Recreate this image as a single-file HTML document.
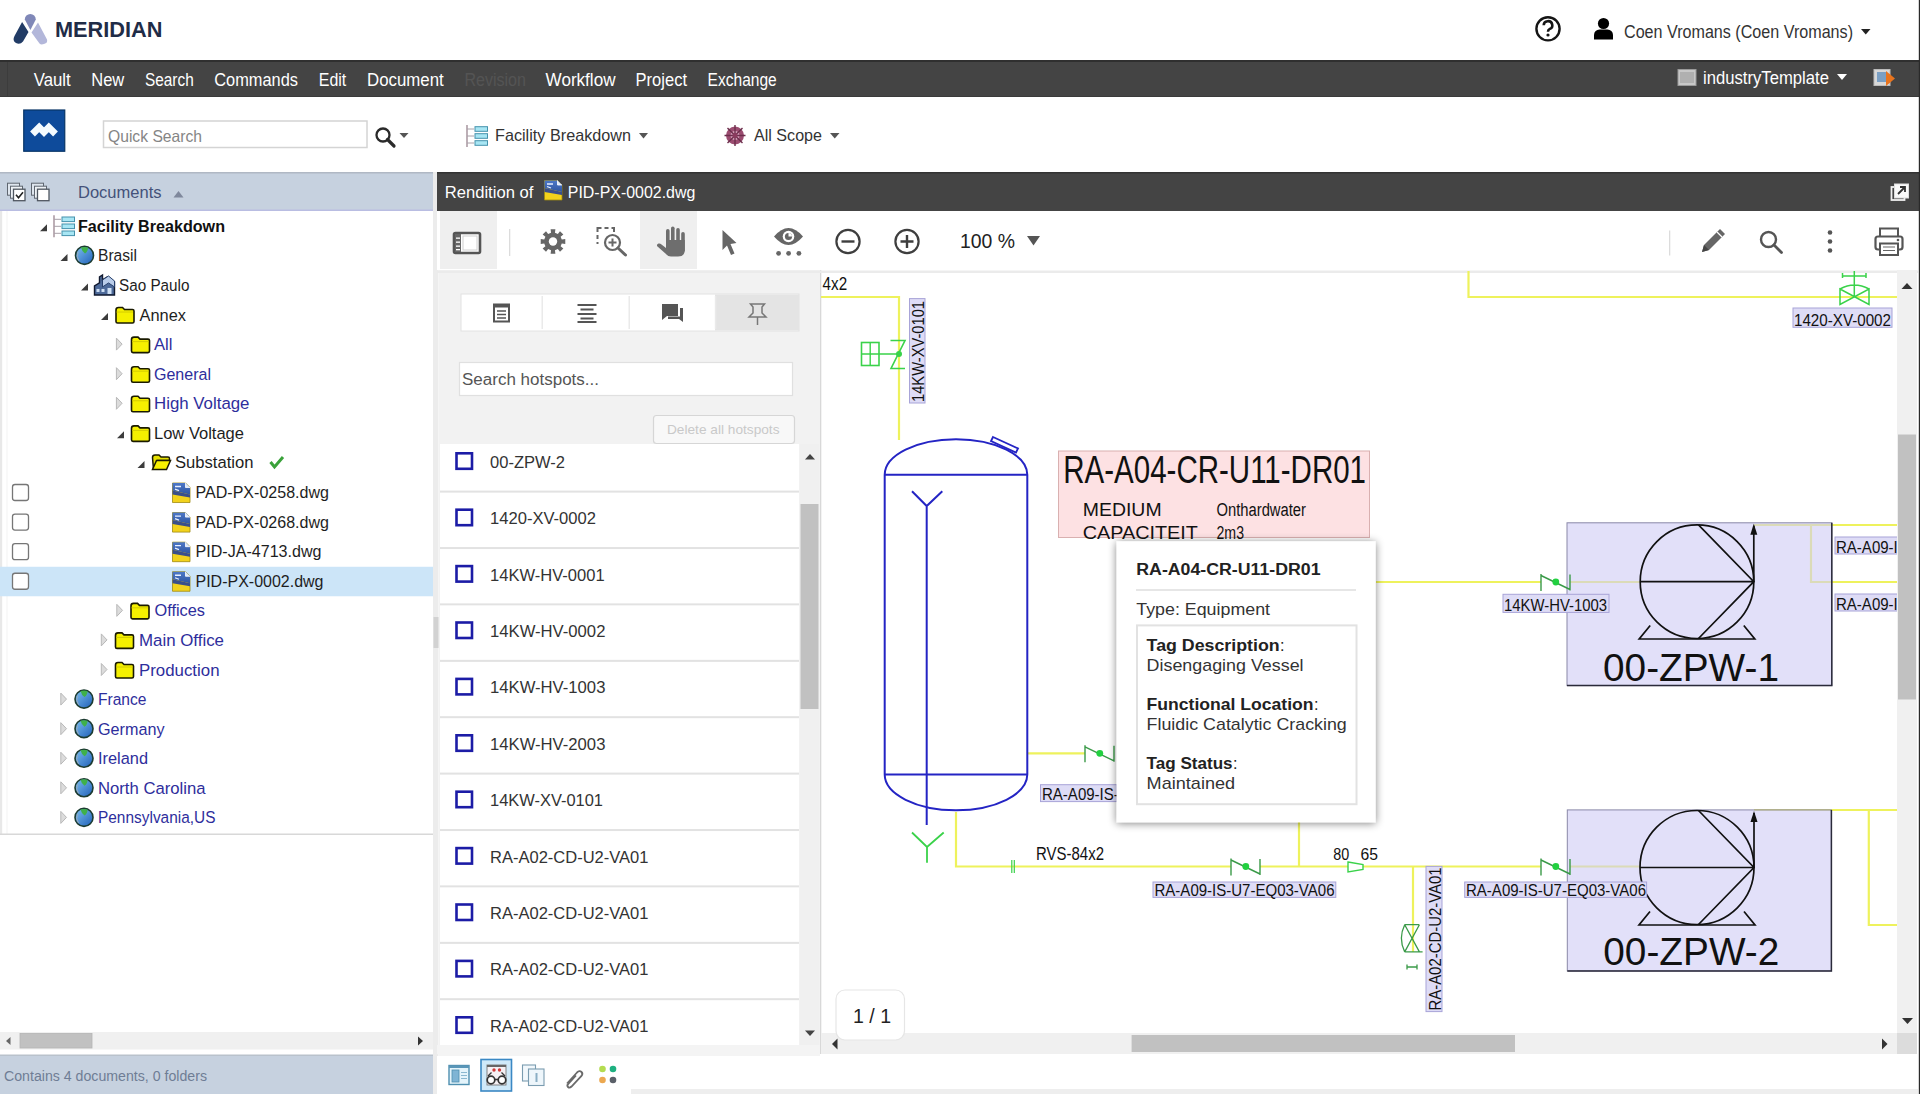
<!DOCTYPE html>
<html><head><meta charset="utf-8"><title>Meridian</title>
<style>
html,body{margin:0;padding:0;width:1920px;height:1094px;overflow:hidden;background:#fff}
svg text{font-family:"Liberation Sans",sans-serif;white-space:pre}
</style></head><body>
<svg width="1920" height="1094" viewBox="0 0 1920 1094" style="position:absolute;left:0;top:0">
<defs>
<linearGradient id="globe" x1="0" y1="0" x2="1" y2="1"><stop offset="0" stop-color="#7ec0f0"/><stop offset="1" stop-color="#1f5fb8"/></linearGradient>
<linearGradient id="fileg" x1="0" y1="0" x2="0" y2="1"><stop offset="0" stop-color="#4d78c8"/><stop offset="1" stop-color="#2f56a0"/></linearGradient>
<filter id="shadow" x="-10%" y="-10%" width="120%" height="120%"><feGaussianBlur in="SourceAlpha" stdDeviation="4.5"/><feOffset dx="0" dy="1"/><feComponentTransfer><feFuncA type="linear" slope="0.5"/></feComponentTransfer><feMerge><feMergeNode/><feMergeNode in="SourceGraphic"/></feMerge></filter>
</defs>
<rect x="0" y="0" width="1920" height="60" fill="#fff" />
<path d="M24.8 19.5 A5.5 5.5 0 0 1 35.8 19.5 L30.4 30 z" fill="#8088b8" stroke="none" stroke-width="1" />
<path d="M22.1 21.9 L28.5 32 L23 41.5 Q20 45 16 43 Q12 40.5 14.5 36 z" fill="#223c66" stroke="none" stroke-width="1" />
<path d="M31.5 32.5 L38 22.5 L47 39.5 Q48 43 44 44 Q41 45 39.5 43.5 z" fill="#b3b7da" stroke="none" stroke-width="1" />
<text x="55" y="37" font-size="21.5" fill="#1f2c47" font-weight="700" textLength="107.5" lengthAdjust="spacingAndGlyphs" >MERIDIAN</text>
<circle cx="1548" cy="28.8" r="11.6" fill="none" stroke="#151515" stroke-width="2.4"/>
<path d="M1543.7 25.2 a4.3 4.1 0 1 1 5.8 3.9 c-1.1 .5 -1.5 1.1 -1.5 2.6" fill="none" stroke="#151515" stroke-width="2.6" />
<circle cx="1548" cy="35" r="1.6" fill="#151515"/>
<circle cx="1603.5" cy="23.5" r="5.6" fill="#000"/>
<path d="M1594 39.5 v-4.5 a5.5 5.5 0 0 1 5.5 -5.5 h8 a5.5 5.5 0 0 1 5.5 5.5 v4.5 z" fill="#000" stroke="none" stroke-width="1" />
<text x="1624" y="38" font-size="17.5" fill="#333" font-weight="400" textLength="229" lengthAdjust="spacingAndGlyphs" >Coen Vromans (Coen Vromans)</text>
<path d="M1861 29 h9.5 l-4.75 5.5 z" fill="#222" stroke="none" stroke-width="1" />
<rect x="0" y="60" width="1920" height="37" fill="#444" />
<rect x="0" y="60" width="1920" height="2" fill="#2f2f2f" />
<rect x="0" y="96" width="1920" height="1" fill="#3a3a3a" />
<rect x="7" y="62" width="1" height="34" fill="#3c3c3c" />
<text x="33.75" y="86" font-size="17.5" fill="#fff" font-weight="400" textLength="37" lengthAdjust="spacingAndGlyphs" >Vault</text>
<text x="91.25" y="86" font-size="17.5" fill="#fff" font-weight="400" textLength="33" lengthAdjust="spacingAndGlyphs" >New</text>
<text x="145" y="86" font-size="17.5" fill="#fff" font-weight="400" textLength="48.75" lengthAdjust="spacingAndGlyphs" >Search</text>
<text x="214.25" y="86" font-size="17.5" fill="#fff" font-weight="400" textLength="83.75" lengthAdjust="spacingAndGlyphs" >Commands</text>
<text x="318.75" y="86" font-size="17.5" fill="#fff" font-weight="400" textLength="27.5" lengthAdjust="spacingAndGlyphs" >Edit</text>
<text x="367" y="86" font-size="17.5" fill="#fff" font-weight="400" textLength="76.75" lengthAdjust="spacingAndGlyphs" >Document</text>
<text x="464.4" y="86" font-size="17.5" fill="#545454" font-weight="400" textLength="61.6" lengthAdjust="spacingAndGlyphs" >Revision</text>
<text x="545.6" y="86" font-size="17.5" fill="#fff" font-weight="400" textLength="69.9" lengthAdjust="spacingAndGlyphs" >Workflow</text>
<text x="635.6" y="86" font-size="17.5" fill="#fff" font-weight="400" textLength="51.4" lengthAdjust="spacingAndGlyphs" >Project</text>
<text x="707.6" y="86" font-size="17.5" fill="#fff" font-weight="400" textLength="69.1" lengthAdjust="spacingAndGlyphs" >Exchange</text>
<rect x="1677.5" y="69" width="19" height="17" fill="#9a9a9a" />
<rect x="1678.5" y="70" width="17" height="15" fill="#c8c8c8" />
<rect x="1680" y="72" width="14" height="11" fill="#b0b0b0" />
<text x="1703" y="84" font-size="17.5" fill="#fff" font-weight="400" textLength="126" lengthAdjust="spacingAndGlyphs" >industryTemplate</text>
<path d="M1837 74 h10 l-5 6 z" fill="#fff" stroke="none" stroke-width="1" />
<rect x="1873.5" y="69" width="17" height="17" fill="#bbb" />
<rect x="1874.5" y="70" width="15" height="15" fill="#d8d8d8" />
<rect x="1877" y="72" width="9" height="10" fill="#7a9fc4" />
<path d="M1886 71 l9 7.5 l-9 7.5 z" fill="#e8741e" stroke="none" stroke-width="1" />
<rect x="0" y="97" width="1920" height="75" fill="#fff" />
<rect x="23.75" y="110" width="41" height="41.25" fill="#0e4b9b" />
<rect x="23.75" y="110" width="41" height="41.25" fill="none" stroke="#073466" stroke-width="1.2"/>
<path d="M32.5 134 L39.2 127.3 L44 132.1 L48.8 127.3 L55.5 134" fill="none" stroke="#f4fbff" stroke-width="6.8" stroke-linejoin="miter" stroke-miterlimit="4"/>
<rect x="103.5" y="121" width="263.5" height="26.5" fill="#fff" stroke="#d4d4d4" stroke-width="1.5"/>
<text x="108" y="141.75" font-size="16.5" fill="#858585" font-weight="400" textLength="94" lengthAdjust="spacingAndGlyphs" >Quick Search</text>
<circle cx="383" cy="135" r="6.5" fill="none" stroke="#2a2a2a" stroke-width="2.3"/>
<path d="M387.5 139.5 L394 146" fill="none" stroke="#2a2a2a" stroke-width="3.2" stroke-linecap="round"/>
<path d="M399.5 133 h9 l-4.5 5 z" fill="#555" stroke="none" stroke-width="1" />
<path d="M467 125 v22" fill="none" stroke="#9a8590" stroke-width="1.3" />
<path d="M467 129 h7" fill="none" stroke="#a8a0a8" stroke-width="1" />
<rect x="475" y="126.7" width="12.5" height="4.6" fill="#a8e6f4" stroke="#4592ac" stroke-width="1"/>
<path d="M467 136 h7" fill="none" stroke="#a8a0a8" stroke-width="1" />
<rect x="475" y="133.7" width="12.5" height="4.6" fill="#a8e6f4" stroke="#4592ac" stroke-width="1"/>
<path d="M467 143 h7" fill="none" stroke="#a8a0a8" stroke-width="1" />
<rect x="475" y="140.7" width="12.5" height="4.6" fill="#a8e6f4" stroke="#4592ac" stroke-width="1"/>
<text x="495" y="141.4" font-size="17" fill="#333" font-weight="400" textLength="136" lengthAdjust="spacingAndGlyphs" >Facility Breakdown</text>
<path d="M639 133 h9 l-4.5 5.5 z" fill="#555" stroke="none" stroke-width="1" />
<circle cx="735" cy="135.5" r="9" fill="#9b4c70"/>
<circle cx="735" cy="135.5" r="4.5" fill="#d7a3bc"/>
<path d="M735 125 v21 M724.5 135.5 h21 M727.5 128 l15 15 M742.5 128 l-15 15" fill="none" stroke="#6c2f4c" stroke-width="1.4" />
<circle cx="735" cy="135.5" r="2.5" fill="#8a3b5e"/>
<text x="754" y="141.4" font-size="17" fill="#333" font-weight="400" textLength="68" lengthAdjust="spacingAndGlyphs" >All Scope</text>
<path d="M830 133 h9.5 l-4.75 5.5 z" fill="#555" stroke="none" stroke-width="1" />
<rect x="0" y="172" width="433" height="39" fill="#c6d1df" />
<rect x="0" y="172" width="433" height="1.5" fill="#b0b8c4" />
<rect x="0" y="209.5" width="433" height="1.5" fill="#b9bde2" />
<rect x="7.5" y="183.2" width="12" height="12" fill="#dfe6ee" stroke="#5f6670" stroke-width="1"/>
<rect x="10.5" y="186.2" width="12" height="12" fill="#eef2f6" stroke="#5f6670" stroke-width="1"/>
<rect x="13.5" y="189.2" width="11.5" height="11.5" fill="#fff" stroke="#4f5660" stroke-width="1.3"/>
<path d="M16 194.7 l2.5 3 l4.5 -5.5" fill="none" stroke="#222" stroke-width="1.6" />
<rect x="31.5" y="183.2" width="12" height="12" fill="#dfe6ee" stroke="#5f6670" stroke-width="1"/>
<rect x="34.5" y="186.2" width="12" height="12" fill="#eef2f6" stroke="#5f6670" stroke-width="1"/>
<rect x="37.5" y="189.2" width="11.5" height="11.5" fill="#fff" stroke="#4f5660" stroke-width="1.3"/>
<text x="78" y="198.3" font-size="16.5" fill="#44527a" font-weight="400" textLength="83.5" lengthAdjust="spacingAndGlyphs" >Documents</text>
<path d="M173.5 197.5 l5 -6.5 l5 6.5 z" fill="#7f889c" stroke="none" stroke-width="1" />
<rect x="433" y="172" width="5.5" height="922" fill="#ececec" />
<rect x="0" y="211" width="433" height="623" fill="#fff" />
<rect x="0" y="211" width="2.2" height="623" fill="#e8e8e8" />
<rect x="6.5" y="211" width="1" height="623" fill="#f4f4f4" />
<path d="M40 231.3 L47 231.3 L47 224.3 z" fill="#3c3c3c" stroke="none" stroke-width="1" />
<path d="M54 215.3 v22" fill="none" stroke="#9a8590" stroke-width="1.3" />
<path d="M54 219.3 h7" fill="none" stroke="#a8a0a8" stroke-width="1" />
<rect x="62" y="217.0" width="12.5" height="4.6" fill="#a8e6f4" stroke="#4592ac" stroke-width="1"/>
<path d="M54 226.3 h7" fill="none" stroke="#a8a0a8" stroke-width="1" />
<rect x="62" y="224.0" width="12.5" height="4.6" fill="#a8e6f4" stroke="#4592ac" stroke-width="1"/>
<path d="M54 233.3 h7" fill="none" stroke="#a8a0a8" stroke-width="1" />
<rect x="62" y="231.0" width="12.5" height="4.6" fill="#a8e6f4" stroke="#4592ac" stroke-width="1"/>
<text x="78" y="231.8" font-size="16.3" fill="#111" font-weight="700" textLength="147" lengthAdjust="spacingAndGlyphs" >Facility Breakdown</text>
<path d="M60.5 260.88 L67.5 260.88 L67.5 253.88 z" fill="#3c3c3c" stroke="none" stroke-width="1" />
<circle cx="84.5" cy="255.38" r="9" fill="url(#globe)" stroke="#1c3b30" stroke-width="1.6"/>
<path d="M81 247.38 q3.5 -1 7 0 q0 4 -3 6 q-3 -2 -4 -6 z" fill="#3fb04a" stroke="none" stroke-width="1" />
<path d="M78 251.88 q-2 5 1 9" fill="none" stroke="#9ab" stroke-width="1" />
<text x="98" y="261.38" font-size="16.3" fill="#1e1e1e" font-weight="400" textLength="39" lengthAdjust="spacingAndGlyphs" >Brasil</text>
<path d="M81 290.46000000000004 L88 290.46000000000004 L88 283.46000000000004 z" fill="#3c3c3c" stroke="none" stroke-width="1" />
<path d="M94.5 294.96000000000004 v-9 l5 -3 v-6 l3 -2 v5 l5 -3 l7 5 v13 z" fill="#4d6a9a" stroke="#111a30" stroke-width="1.4" />
<path d="M102.5 279.96000000000004 l6 -4 l6 5 v6 l-6 -4 l-6 4 z" fill="#b9cdea" stroke="#27406c" stroke-width="1" />
<rect x="96.5" y="288.96000000000004" width="3" height="3" fill="#cfe0f4" />
<rect x="101.5" y="288.96000000000004" width="3" height="3" fill="#cfe0f4" />
<rect x="107.5" y="287.96000000000004" width="4" height="6" fill="#cfe0f4" />
<text x="119" y="290.96000000000004" font-size="16.3" fill="#1e1e1e" font-weight="400" textLength="70.5" lengthAdjust="spacingAndGlyphs" >Sao Paulo</text>
<path d="M101 320.04 L108 320.04 L108 313.04 z" fill="#3c3c3c" stroke="none" stroke-width="1" />
<path d="M116 310.04 q0 -2.5 2.5 -2.5 h4 l2 2 h8 q1.5 0 1.5 1.5 v10.5 q0 1.5 -1.5 1.5 h-15 q-1.5 0 -1.5 -1.5 z" fill="#f5f000" stroke="#1a1a00" stroke-width="1.6" />
<path d="M116.5 312.04 h16.5" fill="none" stroke="#d4cc00" stroke-width="1" />
<text x="139.5" y="320.54" font-size="16.3" fill="#1e1e1e" font-weight="400" textLength="46.5" lengthAdjust="spacingAndGlyphs" >Annex</text>
<path d="M116.39999999999999 338.12 L122.1 344.12 L116.39999999999999 350.12 z" fill="#dcdcdc" stroke="#b8b8b8" stroke-width="1" />
<path d="M131.5 339.62 q0 -2.5 2.5 -2.5 h4 l2 2 h8 q1.5 0 1.5 1.5 v10.5 q0 1.5 -1.5 1.5 h-15 q-1.5 0 -1.5 -1.5 z" fill="#f5f000" stroke="#1a1a00" stroke-width="1.6" />
<path d="M132.0 341.62 h16.5" fill="none" stroke="#d4cc00" stroke-width="1" />
<text x="154" y="350.12" font-size="16.3" fill="#2e2e9c" font-weight="400" textLength="18.5" lengthAdjust="spacingAndGlyphs" >All</text>
<path d="M116.39999999999999 367.7 L122.1 373.7 L116.39999999999999 379.7 z" fill="#dcdcdc" stroke="#b8b8b8" stroke-width="1" />
<path d="M131.5 369.2 q0 -2.5 2.5 -2.5 h4 l2 2 h8 q1.5 0 1.5 1.5 v10.5 q0 1.5 -1.5 1.5 h-15 q-1.5 0 -1.5 -1.5 z" fill="#f5f000" stroke="#1a1a00" stroke-width="1.6" />
<path d="M132.0 371.2 h16.5" fill="none" stroke="#d4cc00" stroke-width="1" />
<text x="154" y="379.7" font-size="16.3" fill="#2e2e9c" font-weight="400" textLength="57" lengthAdjust="spacingAndGlyphs" >General</text>
<path d="M116.39999999999999 397.28 L122.1 403.28 L116.39999999999999 409.28 z" fill="#dcdcdc" stroke="#b8b8b8" stroke-width="1" />
<path d="M131.5 398.78 q0 -2.5 2.5 -2.5 h4 l2 2 h8 q1.5 0 1.5 1.5 v10.5 q0 1.5 -1.5 1.5 h-15 q-1.5 0 -1.5 -1.5 z" fill="#f5f000" stroke="#1a1a00" stroke-width="1.6" />
<path d="M132.0 400.78 h16.5" fill="none" stroke="#d4cc00" stroke-width="1" />
<text x="154" y="409.28" font-size="16.3" fill="#2e2e9c" font-weight="400" textLength="95.5" lengthAdjust="spacingAndGlyphs" >High Voltage</text>
<path d="M117 438.36 L124 438.36 L124 431.36 z" fill="#3c3c3c" stroke="none" stroke-width="1" />
<path d="M131.5 428.36 q0 -2.5 2.5 -2.5 h4 l2 2 h8 q1.5 0 1.5 1.5 v10.5 q0 1.5 -1.5 1.5 h-15 q-1.5 0 -1.5 -1.5 z" fill="#f5f000" stroke="#1a1a00" stroke-width="1.6" />
<path d="M132.0 430.36 h16.5" fill="none" stroke="#d4cc00" stroke-width="1" />
<text x="154" y="438.86" font-size="16.3" fill="#1e1e1e" font-weight="400" textLength="90" lengthAdjust="spacingAndGlyphs" >Low Voltage</text>
<path d="M137.5 467.94 L144.5 467.94 L144.5 460.94 z" fill="#3c3c3c" stroke="none" stroke-width="1" />
<path d="M152.5 457.44 q0 -2.5 2.5 -2.5 h4 l2 2 h7 q1.5 0 1.5 1.5 v2 h-12 l-4 9 z" fill="#e6e000" stroke="#1a1a00" stroke-width="1.5" />
<path d="M152.5 469.44 l4 -9 h14 l-4 9 z" fill="#f8f200" stroke="#1a1a00" stroke-width="1.5" />
<text x="175" y="468.44" font-size="16.3" fill="#1e1e1e" font-weight="400" textLength="78.5" lengthAdjust="spacingAndGlyphs" >Substation</text>
<path d="M270.5 461.94 l4 5 l8.5 -10" fill="none" stroke="#3aa23a" stroke-width="3" />
<path d="M172.5 483.02 h13 l4.5 4.5 v15 h-17.5 z" fill="#f2d21c" stroke="#a08a10" stroke-width="0.8" />
<path d="M172.5 483.02 h13 l4.5 4.5 v7 l-17.5 -4 z" fill="url(#fileg)" stroke="none" stroke-width="1" />
<path d="M172.5 490.52 l17.5 4 v3 l-17.5 -3 z" fill="#3a4f8a" stroke="none" stroke-width="1" />
<path d="M175 486.52 h6 M175 489.02 l4 1.5" fill="none" stroke="#e8f0ff" stroke-width="1.3" />
<path d="M185.5 483.02 v4.5 h4.5" fill="#dde8f8" stroke="#fff" stroke-width="0.8" />
<rect x="12.5" y="484.52" width="16" height="16" fill="#fff" stroke="#767676" stroke-width="1.3" rx="2.5"/>
<text x="195.5" y="498.02" font-size="16.3" fill="#1e1e1e" font-weight="400" textLength="133.5" lengthAdjust="spacingAndGlyphs" >PAD-PX-0258.dwg</text>
<path d="M172.5 512.5999999999999 h13 l4.5 4.5 v15 h-17.5 z" fill="#f2d21c" stroke="#a08a10" stroke-width="0.8" />
<path d="M172.5 512.5999999999999 h13 l4.5 4.5 v7 l-17.5 -4 z" fill="url(#fileg)" stroke="none" stroke-width="1" />
<path d="M172.5 520.0999999999999 l17.5 4 v3 l-17.5 -3 z" fill="#3a4f8a" stroke="none" stroke-width="1" />
<path d="M175 516.0999999999999 h6 M175 518.5999999999999 l4 1.5" fill="none" stroke="#e8f0ff" stroke-width="1.3" />
<path d="M185.5 512.5999999999999 v4.5 h4.5" fill="#dde8f8" stroke="#fff" stroke-width="0.8" />
<rect x="12.5" y="514.0999999999999" width="16" height="16" fill="#fff" stroke="#767676" stroke-width="1.3" rx="2.5"/>
<text x="195.5" y="527.5999999999999" font-size="16.3" fill="#1e1e1e" font-weight="400" textLength="133.5" lengthAdjust="spacingAndGlyphs" >PAD-PX-0268.dwg</text>
<path d="M172.5 542.1800000000001 h13 l4.5 4.5 v15 h-17.5 z" fill="#f2d21c" stroke="#a08a10" stroke-width="0.8" />
<path d="M172.5 542.1800000000001 h13 l4.5 4.5 v7 l-17.5 -4 z" fill="url(#fileg)" stroke="none" stroke-width="1" />
<path d="M172.5 549.6800000000001 l17.5 4 v3 l-17.5 -3 z" fill="#3a4f8a" stroke="none" stroke-width="1" />
<path d="M175 545.6800000000001 h6 M175 548.1800000000001 l4 1.5" fill="none" stroke="#e8f0ff" stroke-width="1.3" />
<path d="M185.5 542.1800000000001 v4.5 h4.5" fill="#dde8f8" stroke="#fff" stroke-width="0.8" />
<rect x="12.5" y="543.6800000000001" width="16" height="16" fill="#fff" stroke="#767676" stroke-width="1.3" rx="2.5"/>
<text x="195.5" y="557.1800000000001" font-size="16.3" fill="#1e1e1e" font-weight="400" textLength="126" lengthAdjust="spacingAndGlyphs" >PID-JA-4713.dwg</text>
<rect x="0" y="566.76" width="433" height="29.5" fill="#cce5f8" />
<path d="M172.5 571.76 h13 l4.5 4.5 v15 h-17.5 z" fill="#f2d21c" stroke="#a08a10" stroke-width="0.8" />
<path d="M172.5 571.76 h13 l4.5 4.5 v7 l-17.5 -4 z" fill="url(#fileg)" stroke="none" stroke-width="1" />
<path d="M172.5 579.26 l17.5 4 v3 l-17.5 -3 z" fill="#3a4f8a" stroke="none" stroke-width="1" />
<path d="M175 575.26 h6 M175 577.76 l4 1.5" fill="none" stroke="#e8f0ff" stroke-width="1.3" />
<path d="M185.5 571.76 v4.5 h4.5" fill="#dde8f8" stroke="#fff" stroke-width="0.8" />
<rect x="12.5" y="573.26" width="16" height="16" fill="#fff" stroke="#767676" stroke-width="1.3" rx="2.5"/>
<text x="195.5" y="586.76" font-size="16.3" fill="#1e1e1e" font-weight="400" textLength="128" lengthAdjust="spacingAndGlyphs" >PID-PX-0002.dwg</text>
<path d="M116.8 604.3399999999999 L122.5 610.3399999999999 L116.8 616.3399999999999 z" fill="#dcdcdc" stroke="#b8b8b8" stroke-width="1" />
<path d="M131 605.8399999999999 q0 -2.5 2.5 -2.5 h4 l2 2 h8 q1.5 0 1.5 1.5 v10.5 q0 1.5 -1.5 1.5 h-15 q-1.5 0 -1.5 -1.5 z" fill="#f5f000" stroke="#1a1a00" stroke-width="1.6" />
<path d="M131.5 607.8399999999999 h16.5" fill="none" stroke="#d4cc00" stroke-width="1" />
<text x="154.5" y="616.3399999999999" font-size="16.3" fill="#2e2e9c" font-weight="400" textLength="50.5" lengthAdjust="spacingAndGlyphs" >Offices</text>
<path d="M101.3 633.9200000000001 L107.0 639.9200000000001 L101.3 645.9200000000001 z" fill="#dcdcdc" stroke="#b8b8b8" stroke-width="1" />
<path d="M115.5 635.4200000000001 q0 -2.5 2.5 -2.5 h4 l2 2 h8 q1.5 0 1.5 1.5 v10.5 q0 1.5 -1.5 1.5 h-15 q-1.5 0 -1.5 -1.5 z" fill="#f5f000" stroke="#1a1a00" stroke-width="1.6" />
<path d="M116.0 637.4200000000001 h16.5" fill="none" stroke="#d4cc00" stroke-width="1" />
<text x="139" y="645.9200000000001" font-size="16.3" fill="#2e2e9c" font-weight="400" textLength="85" lengthAdjust="spacingAndGlyphs" >Main Office</text>
<path d="M101.3 663.5 L107.0 669.5 L101.3 675.5 z" fill="#dcdcdc" stroke="#b8b8b8" stroke-width="1" />
<path d="M115.5 665.0 q0 -2.5 2.5 -2.5 h4 l2 2 h8 q1.5 0 1.5 1.5 v10.5 q0 1.5 -1.5 1.5 h-15 q-1.5 0 -1.5 -1.5 z" fill="#f5f000" stroke="#1a1a00" stroke-width="1.6" />
<path d="M116.0 667.0 h16.5" fill="none" stroke="#d4cc00" stroke-width="1" />
<text x="139" y="675.5" font-size="16.3" fill="#2e2e9c" font-weight="400" textLength="80.5" lengthAdjust="spacingAndGlyphs" >Production</text>
<path d="M60.8 693.0799999999999 L66.5 699.0799999999999 L60.8 705.0799999999999 z" fill="#dcdcdc" stroke="#b8b8b8" stroke-width="1" />
<circle cx="84.0" cy="699.0799999999999" r="9" fill="url(#globe)" stroke="#1c3b30" stroke-width="1.6"/>
<path d="M80.5 691.0799999999999 q3.5 -1 7 0 q0 4 -3 6 q-3 -2 -4 -6 z" fill="#3fb04a" stroke="none" stroke-width="1" />
<path d="M77.5 695.5799999999999 q-2 5 1 9" fill="none" stroke="#9ab" stroke-width="1" />
<text x="98" y="705.0799999999999" font-size="16.3" fill="#2e2e9c" font-weight="400" textLength="48.5" lengthAdjust="spacingAndGlyphs" >France</text>
<path d="M60.8 722.66 L66.5 728.66 L60.8 734.66 z" fill="#dcdcdc" stroke="#b8b8b8" stroke-width="1" />
<circle cx="84.0" cy="728.66" r="9" fill="url(#globe)" stroke="#1c3b30" stroke-width="1.6"/>
<path d="M80.5 720.66 q3.5 -1 7 0 q0 4 -3 6 q-3 -2 -4 -6 z" fill="#3fb04a" stroke="none" stroke-width="1" />
<path d="M77.5 725.16 q-2 5 1 9" fill="none" stroke="#9ab" stroke-width="1" />
<text x="98" y="734.66" font-size="16.3" fill="#2e2e9c" font-weight="400" textLength="66.5" lengthAdjust="spacingAndGlyphs" >Germany</text>
<path d="M60.8 752.24 L66.5 758.24 L60.8 764.24 z" fill="#dcdcdc" stroke="#b8b8b8" stroke-width="1" />
<circle cx="84.0" cy="758.24" r="9" fill="url(#globe)" stroke="#1c3b30" stroke-width="1.6"/>
<path d="M80.5 750.24 q3.5 -1 7 0 q0 4 -3 6 q-3 -2 -4 -6 z" fill="#3fb04a" stroke="none" stroke-width="1" />
<path d="M77.5 754.74 q-2 5 1 9" fill="none" stroke="#9ab" stroke-width="1" />
<text x="98" y="764.24" font-size="16.3" fill="#2e2e9c" font-weight="400" textLength="50" lengthAdjust="spacingAndGlyphs" >Ireland</text>
<path d="M60.8 781.8199999999999 L66.5 787.8199999999999 L60.8 793.8199999999999 z" fill="#dcdcdc" stroke="#b8b8b8" stroke-width="1" />
<circle cx="84.0" cy="787.8199999999999" r="9" fill="url(#globe)" stroke="#1c3b30" stroke-width="1.6"/>
<path d="M80.5 779.8199999999999 q3.5 -1 7 0 q0 4 -3 6 q-3 -2 -4 -6 z" fill="#3fb04a" stroke="none" stroke-width="1" />
<path d="M77.5 784.3199999999999 q-2 5 1 9" fill="none" stroke="#9ab" stroke-width="1" />
<text x="98" y="793.8199999999999" font-size="16.3" fill="#2e2e9c" font-weight="400" textLength="107.5" lengthAdjust="spacingAndGlyphs" >North Carolina</text>
<path d="M60.8 811.3999999999999 L66.5 817.3999999999999 L60.8 823.3999999999999 z" fill="#dcdcdc" stroke="#b8b8b8" stroke-width="1" />
<circle cx="84.0" cy="817.3999999999999" r="9" fill="url(#globe)" stroke="#1c3b30" stroke-width="1.6"/>
<path d="M80.5 809.3999999999999 q3.5 -1 7 0 q0 4 -3 6 q-3 -2 -4 -6 z" fill="#3fb04a" stroke="none" stroke-width="1" />
<path d="M77.5 813.8999999999999 q-2 5 1 9" fill="none" stroke="#9ab" stroke-width="1" />
<text x="98" y="823.3999999999999" font-size="16.3" fill="#2e2e9c" font-weight="400" textLength="117.5" lengthAdjust="spacingAndGlyphs" >Pennsylvania,US</text>
<rect x="0" y="833.5" width="433" height="2" fill="#d8d8d8" />
<rect x="0" y="835" width="433" height="197" fill="#fff" />
<rect x="0" y="1032" width="433" height="17.5" fill="#f0f0f0" />
<rect x="20" y="1033.5" width="72" height="14.5" fill="#c1c1c1" stroke="#b4b4b4" stroke-width="0.8"/>
<path d="M6 1041 l4.5 -4 v8 z" fill="#666" stroke="none" stroke-width="1" />
<path d="M418 1036.5 l5 4.5 l-5 4.5 z" fill="#333" stroke="none" stroke-width="1" />
<rect x="0" y="1055" width="433" height="39" fill="#c6d1df" />
<rect x="0" y="1054.5" width="433" height="1.5" fill="#b9c2cc" />
<text x="4" y="1080.5" font-size="14" fill="#6f7d95" font-weight="400" textLength="203" lengthAdjust="spacingAndGlyphs" >Contains 4 documents, 0 folders</text>
<rect x="433.5" y="617" width="5" height="31" fill="#d2d2d2" />
<rect x="437" y="172" width="1483" height="39" fill="#444" />
<rect x="437" y="172" width="1483" height="1.5" fill="#333" />
<text x="444.8" y="197.9" font-size="17.3" fill="#fff" font-weight="400" textLength="88.5" lengthAdjust="spacingAndGlyphs" >Rendition of</text>
<path d="M544.5 180.5 h13 l4.5 4.5 v15 h-17.5 z" fill="#f2d21c" stroke="#a08a10" stroke-width="0.8" />
<path d="M544.5 180.5 h13 l4.5 4.5 v7 l-17.5 -4 z" fill="url(#fileg)" stroke="none" stroke-width="1" />
<path d="M544.5 188 l17.5 4 v3 l-17.5 -3 z" fill="#3a4f8a" stroke="none" stroke-width="1" />
<path d="M547 184 h6 M547 186.5 l4 1.5" fill="none" stroke="#e8f0ff" stroke-width="1.3" />
<path d="M557.5 180.5 v4.5 h4.5" fill="#dde8f8" stroke="#fff" stroke-width="0.8" />
<text x="567.8" y="197.9" font-size="17.3" fill="#fff" font-weight="400" textLength="127.5" lengthAdjust="spacingAndGlyphs" >PID-PX-0002.dwg</text>
<rect x="1891.5" y="187" width="13" height="13" fill="none" stroke="#f0f0f0" stroke-width="1.8"/>
<rect x="1894.5" y="184" width="14" height="14" fill="#fafafa" stroke="#ddd" stroke-width="1"/>
<path d="M1898 194 l7 -7 M1900 187 h5 v5" fill="none" stroke="#333" stroke-width="1.8" />
<rect x="437" y="211" width="1481" height="59" fill="#fff" />
<rect x="440" y="211" width="57" height="58" fill="#efefef" />
<rect x="640" y="211" width="57" height="58" fill="#efefef" />
<rect x="509" y="229" width="1.3" height="27" fill="#dcdcdc" />
<rect x="1669" y="230.5" width="1.3" height="25" fill="#dcdcdc" />
<rect x="454" y="233" width="26" height="20" fill="#fff" stroke="#555" stroke-width="2.6" rx="1.5"/>
<rect x="455" y="234" width="6" height="18" fill="#666" />
<rect x="456" y="237.5" width="4" height="1.3" fill="#fff" />
<rect x="456" y="241.5" width="4" height="1.3" fill="#fff" />
<rect x="456" y="245.5" width="4" height="1.3" fill="#fff" />
<rect x="456" y="249" width="4" height="1.3" fill="#fff" />
<rect x="463" y="236" width="14" height="14" fill="#fff" stroke="#d0d0d0" stroke-width="1"/>
<path d="M565.27 239.11 L565.27 243.89 L561.79 243.45 L560.59 246.34 L563.36 248.49 L559.99 251.86 L557.84 249.09 L554.95 250.29 L555.39 253.77 L550.61 253.77 L551.05 250.29 L548.16 249.09 L546.01 251.86 L542.64 248.49 L545.41 246.34 L544.21 243.45 L540.73 243.89 L540.73 239.11 L544.21 239.55 L545.41 236.66 L542.64 234.51 L546.01 231.14 L548.16 233.91 L551.05 232.71 L550.61 229.23 L555.39 229.23 L554.95 232.71 L557.84 233.91 L559.99 231.14 L563.36 234.51 L560.59 236.66 L561.79 239.55 z" fill="#666" stroke="none" stroke-width="1" />
<circle cx="553" cy="241.5" r="4.2" fill="#fff"/>
<path d="M597.5 232 v-4 h4 M604.5 228 h4 M611.5 228 h2.5 v4 M597.5 235 v4 M597.5 242 v2" fill="none" stroke="#666" stroke-width="2" />
<circle cx="612.5" cy="242.5" r="7.5" fill="#fff" stroke="#666" stroke-width="2.2"/>
<path d="M612.5 238.5 v8 M608.5 242.5 h8" fill="none" stroke="#666" stroke-width="2" />
<path d="M618 248 L625.5 255" fill="none" stroke="#666" stroke-width="3" stroke-linecap="round"/>
<rect x="666" y="229" width="3.6000000000000227" height="20" fill="#6e6e6e" rx="1.8"/>
<rect x="671" y="226.5" width="3.6000000000000227" height="20" fill="#6e6e6e" rx="1.8"/>
<rect x="676.2" y="228" width="3.599999999999909" height="20" fill="#6e6e6e" rx="1.8"/>
<rect x="681.2" y="232" width="3.599999999999909" height="20" fill="#6e6e6e" rx="1.8"/>
<path d="M666 240 H684.8 V250 Q684.8 256.5 678 256.5 H671 Q668 256.5 666 254 L657.5 246.5 Q656 244.5 658.5 243.5 Q660 243 661.5 244.5 L666 248 z" fill="#6e6e6e" stroke="none" stroke-width="1" />
<path d="M722.5 230 L736.5 243 L730.5 244 L734.5 253.5 L731 255 L727 245.5 L722.5 250 z" fill="#666" stroke="none" stroke-width="1" />
<path d="M774 236.5 q14.5 -17 29 0 q-14.5 17 -29 0 z" fill="#666" stroke="none" stroke-width="1" />
<circle cx="788.5" cy="236.5" r="5.8" fill="#fff"/>
<circle cx="788.5" cy="236.5" r="3.6" fill="#666"/>
<path d="M788.5 233 a3.5 3.5 0 0 1 3.5 3.5 h-3.5 z" fill="#fff" stroke="none" stroke-width="1" />
<circle cx="778.6" cy="253.3" r="2.4" fill="#666"/>
<circle cx="788.6" cy="253.3" r="2.4" fill="#666"/>
<circle cx="798.9" cy="253.3" r="2.4" fill="#666"/>
<circle cx="848" cy="241.5" r="11.6" fill="none" stroke="#3e3e3e" stroke-width="2.2"/>
<path d="M841.5 241.5 h13" fill="none" stroke="#3e3e3e" stroke-width="2.4" />
<circle cx="907" cy="241.5" r="11.6" fill="none" stroke="#3e3e3e" stroke-width="2.2"/>
<path d="M900.5 241.5 h13 M907 235 v13" fill="none" stroke="#3e3e3e" stroke-width="2.4" />
<text x="960" y="248" font-size="20.5" fill="#222" font-weight="400" textLength="55" lengthAdjust="spacingAndGlyphs" >100 %</text>
<path d="M1027 236 h13 l-6.5 9.5 z" fill="#555" stroke="none" stroke-width="1" />
<path d="M1702 252 l2 -7 l16 -16 l5 5 l-16 16 z" fill="#666" stroke="none" stroke-width="1" />
<path d="M1702 252 l2 -7 l5 5 z" fill="#444" stroke="none" stroke-width="1" />
<path d="M1717 232 l5 5" fill="none" stroke="#fff" stroke-width="1.2" />
<circle cx="1768.5" cy="239.5" r="7.5" fill="none" stroke="#555" stroke-width="2.4"/>
<path d="M1774 245 L1781.5 252.5" fill="none" stroke="#555" stroke-width="2.8" stroke-linecap="round"/>
<circle cx="1830" cy="232.5" r="2.3" fill="#555"/>
<circle cx="1830" cy="241.5" r="2.3" fill="#555"/>
<circle cx="1830" cy="250.5" r="2.3" fill="#555"/>
<rect x="1880" y="228.5" width="18" height="9" fill="#fff" stroke="#555" stroke-width="2"/>
<rect x="1875.5" y="236.5" width="27" height="13" fill="#fff" stroke="#555" stroke-width="2.2" rx="2.5"/>
<rect x="1880" y="243.5" width="18" height="11.5" fill="#fff" stroke="#555" stroke-width="2"/>
<path d="M1883 247 h12 M1883 250.5 h12" fill="none" stroke="#666" stroke-width="1.2" />
<circle cx="1898" cy="240" r="1.3" fill="#555"/>
<rect x="439" y="270" width="381" height="784" fill="#f2f2f2" />
<rect x="461" y="294" width="338" height="37" fill="#fff" stroke="#e2e2e2" stroke-width="1"/>
<rect x="715" y="294.5" width="84" height="36" fill="#e4e4e4" />
<rect x="541.5" y="296" width="1.5" height="33" fill="#eaeaea" />
<rect x="628.5" y="296" width="1.5" height="33" fill="#eaeaea" />
<rect x="714.8" y="296" width="1.5" height="33" fill="#eaeaea" />
<rect x="494" y="304.5" width="15" height="17" fill="#fff" stroke="#555" stroke-width="2"/>
<rect x="494" y="304.5" width="15" height="3" fill="#555" />
<path d="M497 311 h9 M497 314.5 h9 M497 318 h9" fill="none" stroke="#555" stroke-width="1.4" />
<path d="M577.5 305 h19 M580.5 309.5 h13 M577.5 314 h19 M580.5 318.5 h13 M577.5 322 h19" fill="none" stroke="#555" stroke-width="1.8" />
<path d="M662 304 h16 v12 h-11 l-5 4 z" fill="#555" stroke="none" stroke-width="1" />
<path d="M680 308 h3 v14 l-4 -3 h-11 v-2.5 h12 z" fill="#555" stroke="none" stroke-width="1" />
<path d="M750.5 304 h14 l-2.5 3 v6 l4 4 h-17 l4 -4 v-6 z M757.5 317 v8" fill="none" stroke="#777" stroke-width="1.5" />
<rect x="459.5" y="362.5" width="333" height="33" fill="#fff" stroke="#e0e0e0" stroke-width="1.2"/>
<text x="462" y="384.9" font-size="17.3" fill="#555" font-weight="400" textLength="137" lengthAdjust="spacingAndGlyphs" >Search hotspots...</text>
<rect x="653.5" y="415.5" width="141" height="28" fill="#f8f8f8" stroke="#d6d6d6" stroke-width="1.2" rx="3"/>
<text x="667" y="434" font-size="13.5" fill="#c9c9c9" font-weight="400" textLength="112.5" lengthAdjust="spacingAndGlyphs" >Delete all hotspots</text>
<clipPath id="lc"><rect x="437" y="444" width="383" height="601"/></clipPath>
<g clip-path="url(#lc)">
<rect x="440" y="434.3" width="359" height="2" fill="#e2e2e2" />
<rect x="440" y="436.3" width="359" height="54.4" fill="#fff" />
<rect x="456.5" y="453.3" width="15.5" height="15.5" fill="none" stroke="#1c1ca6" stroke-width="2.6"/>
<text x="490" y="467.8" font-size="17.3" fill="#333" font-weight="400" textLength="75" lengthAdjust="spacingAndGlyphs" >00-ZPW-2</text>
<rect x="440" y="490.70000000000005" width="359" height="2" fill="#e2e2e2" />
<rect x="440" y="492.70000000000005" width="359" height="54.4" fill="#fff" />
<rect x="456.5" y="509.70000000000005" width="15.5" height="15.5" fill="none" stroke="#1c1ca6" stroke-width="2.6"/>
<text x="490" y="524.2" font-size="17.3" fill="#333" font-weight="400" textLength="106" lengthAdjust="spacingAndGlyphs" >1420-XV-0002</text>
<rect x="440" y="547.1" width="359" height="2" fill="#e2e2e2" />
<rect x="440" y="549.1" width="359" height="54.4" fill="#fff" />
<rect x="456.5" y="566.1" width="15.5" height="15.5" fill="none" stroke="#1c1ca6" stroke-width="2.6"/>
<text x="490" y="580.6" font-size="17.3" fill="#333" font-weight="400" textLength="114.6" lengthAdjust="spacingAndGlyphs" >14KW-HV-0001</text>
<rect x="440" y="603.5" width="359" height="2" fill="#e2e2e2" />
<rect x="440" y="605.5" width="359" height="54.4" fill="#fff" />
<rect x="456.5" y="622.5" width="15.5" height="15.5" fill="none" stroke="#1c1ca6" stroke-width="2.6"/>
<text x="490" y="637.0" font-size="17.3" fill="#333" font-weight="400" textLength="115.4" lengthAdjust="spacingAndGlyphs" >14KW-HV-0002</text>
<rect x="440" y="659.9" width="359" height="2" fill="#e2e2e2" />
<rect x="440" y="661.9" width="359" height="54.4" fill="#fff" />
<rect x="456.5" y="678.9" width="15.5" height="15.5" fill="none" stroke="#1c1ca6" stroke-width="2.6"/>
<text x="490" y="693.4" font-size="17.3" fill="#333" font-weight="400" textLength="115.4" lengthAdjust="spacingAndGlyphs" >14KW-HV-1003</text>
<rect x="440" y="716.3" width="359" height="2" fill="#e2e2e2" />
<rect x="440" y="718.3" width="359" height="54.4" fill="#fff" />
<rect x="456.5" y="735.3" width="15.5" height="15.5" fill="none" stroke="#1c1ca6" stroke-width="2.6"/>
<text x="490" y="749.8" font-size="17.3" fill="#333" font-weight="400" textLength="115.4" lengthAdjust="spacingAndGlyphs" >14KW-HV-2003</text>
<rect x="440" y="772.7" width="359" height="2" fill="#e2e2e2" />
<rect x="440" y="774.7" width="359" height="54.4" fill="#fff" />
<rect x="456.5" y="791.7" width="15.5" height="15.5" fill="none" stroke="#1c1ca6" stroke-width="2.6"/>
<text x="490" y="806.2" font-size="17.3" fill="#333" font-weight="400" textLength="113" lengthAdjust="spacingAndGlyphs" >14KW-XV-0101</text>
<rect x="440" y="829.1" width="359" height="2" fill="#e2e2e2" />
<rect x="440" y="831.1" width="359" height="54.4" fill="#fff" />
<rect x="456.5" y="848.1" width="15.5" height="15.5" fill="none" stroke="#1c1ca6" stroke-width="2.6"/>
<text x="490" y="862.6" font-size="17.3" fill="#333" font-weight="400" textLength="158.5" lengthAdjust="spacingAndGlyphs" >RA-A02-CD-U2-VA01</text>
<rect x="440" y="885.5" width="359" height="2" fill="#e2e2e2" />
<rect x="440" y="887.5" width="359" height="54.4" fill="#fff" />
<rect x="456.5" y="904.5" width="15.5" height="15.5" fill="none" stroke="#1c1ca6" stroke-width="2.6"/>
<text x="490" y="919.0" font-size="17.3" fill="#333" font-weight="400" textLength="158.5" lengthAdjust="spacingAndGlyphs" >RA-A02-CD-U2-VA01</text>
<rect x="440" y="941.9" width="359" height="2" fill="#e2e2e2" />
<rect x="440" y="943.9" width="359" height="54.4" fill="#fff" />
<rect x="456.5" y="960.9" width="15.5" height="15.5" fill="none" stroke="#1c1ca6" stroke-width="2.6"/>
<text x="490" y="975.4" font-size="17.3" fill="#333" font-weight="400" textLength="158.5" lengthAdjust="spacingAndGlyphs" >RA-A02-CD-U2-VA01</text>
<rect x="440" y="998.3" width="359" height="2" fill="#e2e2e2" />
<rect x="440" y="1000.3" width="359" height="54.4" fill="#fff" />
<rect x="456.5" y="1017.3" width="15.5" height="15.5" fill="none" stroke="#1c1ca6" stroke-width="2.6"/>
<text x="490" y="1031.8" font-size="17.3" fill="#333" font-weight="400" textLength="158.5" lengthAdjust="spacingAndGlyphs" >RA-A02-CD-U2-VA01</text>
</g>
<rect x="437" y="1045" width="383" height="9" fill="#f4f4f4" />
<rect x="800" y="444" width="19" height="601" fill="#f0f0f0" />
<rect x="800.5" y="504" width="18" height="205" fill="#c1c1c1" />
<path d="M805 459.5 l5 -5.5 l5 5.5 z" fill="#444" stroke="none" stroke-width="1" />
<path d="M805 1030.5 l5 5.5 l5 -5.5 z" fill="#444" stroke="none" stroke-width="1" />
<clipPath id="dc"><rect x="821" y="271" width="1076" height="763"/></clipPath>
<rect x="820" y="270" width="1098" height="784" fill="#fff" />
<rect x="820" y="270" width="1.3" height="784" fill="#d8d8d8" />
<rect x="437" y="270.5" width="1481" height="2.5" fill="#ebebeb" />
<g clip-path="url(#dc)">
<path d="M820 297 H899 V440" fill="none" stroke="#eef25c" stroke-width="2.2" />
<path d="M1468.5 270 V297 H1897" fill="none" stroke="#eef25c" stroke-width="2.2" />
<path d="M1027 753.3 H1085" fill="none" stroke="#eef25c" stroke-width="2.2" />
<path d="M956 812 V866.5 H1231 M1260 866.5 H1348 M1363 866.5 H1541 M1570 866.5 H1640" fill="none" stroke="#eef25c" stroke-width="2.2" />
<path d="M1299 822 V866.5" fill="none" stroke="#eef25c" stroke-width="2.2" />
<path d="M1376 582 H1541 M1570 582 H1640" fill="none" stroke="#eef25c" stroke-width="2.2" />
<path d="M1413 866.5 V952" fill="none" stroke="#eef25c" stroke-width="2.2" />
<path d="M1754 525 H1897 M1811 525 V582 H1897" fill="none" stroke="#eef25c" stroke-width="2.2" />
<path d="M1754 810 H1897 M1868.8 810 V925 H1897" fill="none" stroke="#eef25c" stroke-width="2.2" />
<rect x="1567" y="522.8" width="264.79999999999995" height="162.80000000000007" fill="#cfccf5" fill-opacity="0.6" stroke="#8a88a8" stroke-width="1"/>
<path d="M1567 685.6 H1831.8 V522.8" fill="none" stroke="#2a2a3a" stroke-width="1.5" />
<rect x="1567.3" y="809.9" width="264.10000000000014" height="161.0" fill="#cfccf5" fill-opacity="0.6" stroke="#8a88a8" stroke-width="1"/>
<path d="M1567.3 970.9 H1831.4 V809.9" fill="none" stroke="#2a2a3a" stroke-width="1.5" />
<text x="822.6" y="290" font-size="18" fill="#111" font-weight="400" textLength="24.5" lengthAdjust="spacingAndGlyphs" >4x2</text>
<rect x="861.5" y="342.5" width="17.5" height="23" fill="none" stroke="#3ad24a" stroke-width="1.6"/>
<path d="M870.2 342.5 V365.5 M861.5 354 H879 H899" fill="none" stroke="#3ad24a" stroke-width="1.4" />
<circle cx="899" cy="354" r="3" fill="#3ad24a"/>
<path d="M890.5 340.5 H905 L891 368.5 H905" fill="none" stroke="#3ad24a" stroke-width="1.6" />
<rect x="909.5" y="298.6" width="15.5" height="104.39999999999998" fill="#dedcf6" stroke="#a8a4d8" stroke-width="1"/>
<text x="0" y="0" font-size="17" fill="#111" textLength="101" lengthAdjust="spacingAndGlyphs" transform="translate(923.5 402) rotate(-90)">14KW-XV-0101</text>
<path d="M884.7 774.6 V474.8 A71.3 35.6 0 0 1 1027.3 474.8 V774.6 A71.3 35.6 0 0 1 884.7 774.6 z" fill="none" stroke="#2424c4" stroke-width="2" />
<path d="M884.7 474.8 H1027.3 M884.7 774.6 H1027.3" fill="none" stroke="#2424c4" stroke-width="2" />
<path d="M912 491.3 L926.7 506 L942.3 491.3 M926.7 506 V825" fill="none" stroke="#2424c4" stroke-width="2" />
<path d="M993 437 L1018 448.5 L1016 452.5 L991 441 z" fill="#fff" stroke="#2424c4" stroke-width="1.8" />
<path d="M912 832.5 L927 847 L943.7 832.5 M927 847 V862.7" fill="none" stroke="#3ad24a" stroke-width="1.8" />
<path d="M1011.8 860 V873 M1014.3 860 V873" fill="none" stroke="#3ad24a" stroke-width="1.2" />
<rect x="1040.5" y="784.7" width="76.5" height="16.899999999999977" fill="#dedcf6" stroke="#a8a4d8" stroke-width="1"/>
<text x="1042" y="799.5" font-size="16.5" fill="#111" font-weight="400" textLength="180" lengthAdjust="spacingAndGlyphs" >RA-A09-IS-U7-EQ03-VA06</text>
<text x="1036" y="860.3" font-size="18" fill="#111" font-weight="400" textLength="68" lengthAdjust="spacingAndGlyphs" >RVS-84x2</text>
<path d="M1085 745.3 V762.3 M1085 746.8 L1114 760.8 M1114 745.8 V761.8" fill="none" stroke="#3a9a48" stroke-width="1.4" />
<circle cx="1099.8" cy="753.3" r="3.4" fill="#22d040"/>
<path d="M1231 858.5 V875.5 M1231 860.0 L1260 874.0 M1260 859.0 V875.0" fill="none" stroke="#3a9a48" stroke-width="1.4" />
<circle cx="1245.8" cy="866.5" r="3.4" fill="#22d040"/>
<rect x="1153" y="882" width="182.79999999999995" height="15.399999999999977" fill="#dedcf6" stroke="#a8a4d8" stroke-width="1"/>
<text x="1154.5" y="896" font-size="16.5" fill="#111" font-weight="400" textLength="180" lengthAdjust="spacingAndGlyphs" >RA-A09-IS-U7-EQ03-VA06</text>
<text x="1333.3" y="860.3" font-size="17" fill="#111" font-weight="400" textLength="16" lengthAdjust="spacingAndGlyphs" >80</text>
<text x="1360.4" y="860.3" font-size="17" fill="#111" font-weight="400" textLength="17.5" lengthAdjust="spacingAndGlyphs" >65</text>
<path d="M1348 862 L1363 864.5 V869.5 L1348 872 z" fill="none" stroke="#3ad24a" stroke-width="1.4" />
<path d="M1541 574 V591 M1541 575.5 L1570 589.5 M1570 574.5 V590.5" fill="none" stroke="#3a9a48" stroke-width="1.4" />
<circle cx="1555.8" cy="582" r="3.4" fill="#22d040"/>
<path d="M1842.5 273 v5 M1866 273 v5 M1842.5 276 H1866 M1854.3 271 V297 M1840 289 L1869 304.4 V289 L1840 304.4 z M1840 289 Q1854.3 281 1869 289" fill="none" stroke="#3ad24a" stroke-width="1.5" />
<rect x="1793" y="308" width="99" height="19.30000000000001" fill="#dedcf6" stroke="#a8a4d8" stroke-width="1"/>
<text x="1794" y="325.5" font-size="17" fill="#111" font-weight="400" textLength="97" lengthAdjust="spacingAndGlyphs" >1420-XV-0002</text>
<circle cx="1697" cy="581.7" r="56.8" fill="none" stroke="#111" stroke-width="1.7"/>
<path d="M1640.2 581.7 H1753.8 M1698.5 524.9000000000001 L1753.8 581.7 L1698.5 638.5" fill="none" stroke="#111" stroke-width="1.7" />
<path d="M1650.2 625.5 L1639.2 639.0 H1754.8 L1743.8 625.5" fill="none" stroke="#111" stroke-width="1.7" />
<path d="M1753.8 581.7 V525.8" fill="none" stroke="#111" stroke-width="1.7" />
<path d="M1750.3 534.8 L1753.8 523.8 L1757.3 534.8 z" fill="#111" stroke="none" stroke-width="1" />
<text x="1603" y="680.5" font-size="38" fill="#111" font-weight="400" textLength="176" lengthAdjust="spacingAndGlyphs" >00-ZPW-1</text>
<circle cx="1697" cy="867.5" r="57" fill="none" stroke="#111" stroke-width="1.7"/>
<path d="M1640 867.5 H1754 M1698.5 810.5 L1754 867.5 L1698.5 924.5" fill="none" stroke="#111" stroke-width="1.7" />
<path d="M1650 911.5 L1639 925.0 H1755 L1744 911.5" fill="none" stroke="#111" stroke-width="1.7" />
<path d="M1754 867.5 V812.9" fill="none" stroke="#111" stroke-width="1.7" />
<path d="M1750.5 821.9 L1754 810.9 L1757.5 821.9 z" fill="#111" stroke="none" stroke-width="1" />
<text x="1603.3" y="964.8" font-size="38" fill="#111" font-weight="400" textLength="176" lengthAdjust="spacingAndGlyphs" >00-ZPW-2</text>
<rect x="1503" y="594.3" width="106" height="18.100000000000023" fill="#dedcf6" stroke="#a8a4d8" stroke-width="1"/>
<text x="1504" y="610.5" font-size="17" fill="#111" font-weight="400" textLength="103" lengthAdjust="spacingAndGlyphs" >14KW-HV-1003</text>
<rect x="1835" y="537" width="85" height="17" fill="#dedcf6" stroke="#a8a4d8" stroke-width="1"/>
<text x="1836" y="553" font-size="16.5" fill="#111" font-weight="400" textLength="180" lengthAdjust="spacingAndGlyphs" >RA-A09-IS-U7-EQ03-VA06</text>
<rect x="1835" y="594" width="85" height="17" fill="#dedcf6" stroke="#a8a4d8" stroke-width="1"/>
<text x="1836" y="610" font-size="16.5" fill="#111" font-weight="400" textLength="180" lengthAdjust="spacingAndGlyphs" >RA-A09-IS-U7-EQ03-VA06</text>
<path d="M1541 858.5 V875.5 M1541 860.0 L1570 874.0 M1570 859.0 V875.0" fill="none" stroke="#3a9a48" stroke-width="1.4" />
<circle cx="1555.8" cy="866.5" r="3.4" fill="#22d040"/>
<rect x="1464.7" y="882" width="181.89999999999986" height="15.399999999999977" fill="#dedcf6" stroke="#a8a4d8" stroke-width="1"/>
<text x="1466" y="896" font-size="16.5" fill="#111" font-weight="400" textLength="180" lengthAdjust="spacingAndGlyphs" >RA-A09-IS-U7-EQ03-VA06</text>
<path d="M1404.7 924.7 L1419.4 951.9 M1419.4 924.7 L1404.7 951.9 M1404.7 924.7 H1419.4 M1404.7 951.9 H1422.6 M1404.7 924.7 Q1398 938.3 1404.7 951.9 M1407 967 h10 M1407 964.5 v5 M1417 964.5 v5" fill="none" stroke="#3a9a48" stroke-width="1.3" />
<rect x="1426" y="866.4" width="16" height="145.20000000000005" fill="#dedcf6" stroke="#a8a4d8" stroke-width="1"/>
<text x="0" y="0" font-size="16.5" fill="#111" textLength="143" lengthAdjust="spacingAndGlyphs" transform="translate(1440.5 1010.5) rotate(-90)">RA-A02-CD-U2-VA01</text>
<rect x="1058.5" y="451" width="311" height="86.5" fill="#fde1e3" stroke="#d9b0b0" stroke-width="1"/>
<text x="1063.3" y="482.5" font-size="38" fill="#111" font-weight="400" textLength="302.7" lengthAdjust="spacingAndGlyphs" >RA-A04-CR-U11-DR01</text>
<text x="1082.8" y="515.8" font-size="18" fill="#111" font-weight="400" textLength="78.8" lengthAdjust="spacingAndGlyphs" >MEDIUM</text>
<text x="1216.5" y="515.8" font-size="18" fill="#111" font-weight="400" textLength="89.5" lengthAdjust="spacingAndGlyphs" >Onthardwater</text>
<text x="1082.8" y="539.2" font-size="18" fill="#111" font-weight="400" textLength="115" lengthAdjust="spacingAndGlyphs" >CAPACITEIT</text>
<text x="1216.5" y="539.2" font-size="18" fill="#111" font-weight="400" textLength="27.5" lengthAdjust="spacingAndGlyphs" >2m3</text>
</g>
<g filter="url(#shadow)">
<rect x="1116.6" y="541.3" width="259" height="281" fill="#fff" />
</g>
<text x="1136.3" y="575.3" font-size="16" fill="#222" font-weight="700" textLength="184.2" lengthAdjust="spacingAndGlyphs" >RA-A04-CR-U11-DR01</text>
<rect x="1136" y="589" width="220" height="2" fill="#e6e6e6" />
<text x="1136.3" y="615.3" font-size="17" fill="#333" font-weight="400" textLength="133.7" lengthAdjust="spacingAndGlyphs" >Type: Equipment</text>
<rect x="1137" y="625.4" width="219.5" height="178.8" fill="#fff" stroke="#e2e2e2" stroke-width="2"/>
<text x="1146.6" y="650.6" font-size="17" fill="#222" font-weight="700" textLength="133" lengthAdjust="spacingAndGlyphs" >Tag Description</text>
<text x="1280" y="650.6" font-size="17" fill="#222" font-weight="400" textLength="4.5" lengthAdjust="spacingAndGlyphs" >:</text>
<text x="1146.6" y="671.2" font-size="17" fill="#333" font-weight="400" textLength="157" lengthAdjust="spacingAndGlyphs" >Disengaging Vessel</text>
<text x="1146.6" y="709.6" font-size="17" fill="#222" font-weight="700" textLength="167" lengthAdjust="spacingAndGlyphs" >Functional Location</text>
<text x="1314" y="709.6" font-size="17" fill="#222" font-weight="400" textLength="4.5" lengthAdjust="spacingAndGlyphs" >:</text>
<text x="1146.6" y="730.2" font-size="17" fill="#333" font-weight="400" textLength="200.2" lengthAdjust="spacingAndGlyphs" >Fluidic Catalytic Cracking</text>
<text x="1146.6" y="768.5" font-size="17" fill="#222" font-weight="700" textLength="86" lengthAdjust="spacingAndGlyphs" >Tag Status</text>
<text x="1233" y="768.5" font-size="17" fill="#222" font-weight="400" textLength="4.5" lengthAdjust="spacingAndGlyphs" >:</text>
<text x="1146.6" y="789.1" font-size="17" fill="#333" font-weight="400" textLength="88.5" lengthAdjust="spacingAndGlyphs" >Maintained</text>
<rect x="1897" y="270" width="20" height="763" fill="#f0f0f0" />
<rect x="1898" y="434.5" width="18" height="265" fill="#c1c1c1" />
<path d="M1901.5 289 l5.5 -6 l5.5 6 z" fill="#333" stroke="none" stroke-width="1" />
<path d="M1902 1018 l5.5 6 l5.5 -6 z" fill="#333" stroke="none" stroke-width="1" />
<rect x="821" y="1033" width="1076" height="21" fill="#f0f0f0" />
<rect x="1131.6" y="1035" width="383.4" height="17" fill="#c1c1c1" />
<path d="M837.5 1038.5 l-5.5 5.5 l5.5 5.5 z" fill="#333" stroke="none" stroke-width="1" />
<path d="M1882 1038.5 l5.5 5.5 l-5.5 5.5 z" fill="#333" stroke="none" stroke-width="1" />
<rect x="1897" y="1033" width="20" height="21" fill="#dcdcdc" />
<rect x="836" y="990" width="68.5" height="50" fill="#fff" stroke="#e6e6e6" stroke-width="1.2" rx="9"/>
<text x="853" y="1023" font-size="20" fill="#222" font-weight="400" textLength="38" lengthAdjust="spacingAndGlyphs" >1 / 1</text>
<rect x="437" y="1056" width="1481" height="38" fill="#fff" />
<rect x="439" y="1054" width="381" height="2" fill="#f4f4f4" />
<rect x="631" y="1089" width="1287" height="5" fill="#eeeeee" />
<rect x="449" y="1065.5" width="20" height="19" fill="#e4f4fb" stroke="#4f8fb0" stroke-width="1.4"/>
<rect x="449" y="1065.5" width="20" height="2.5" fill="#5a96b8" />
<rect x="452" y="1070" width="7" height="12" fill="#7fb4d4" stroke="#4f8fb0" stroke-width="0.8"/>
<path d="M461 1072.5 h6 M461 1075.5 h6 M461 1078.5 h6" fill="none" stroke="#8ab8d0" stroke-width="1" />
<rect x="481" y="1059.5" width="30.5" height="31.5" fill="#cfe9f9" stroke="#3a88c4" stroke-width="1.6"/>
<rect x="487" y="1065" width="19" height="20" fill="#f4f0f4" stroke="#777" stroke-width="0.9"/>
<rect x="487" y="1065" width="19" height="2" fill="#666" />
<circle cx="494" cy="1070" r="1.7" fill="#d03a3a"/><circle cx="499.5" cy="1070" r="1.7" fill="#d03a3a"/>
<circle cx="491" cy="1080" r="3.8" fill="#fff" stroke="#333" stroke-width="1.7"/><circle cx="502" cy="1080" r="3.8" fill="#fff" stroke="#333" stroke-width="1.7"/>
<path d="M494.8 1079.5 h3.4 M488 1076 l3.5 -3.5 M505 1076 l-3.5 -3.5" fill="none" stroke="#333" stroke-width="1.4" />
<rect x="522.5" y="1065" width="13" height="16" fill="#f2f8fc" stroke="#7a9cb0" stroke-width="1.1"/>
<rect x="528.5" y="1069" width="15.5" height="16.5" fill="#eef6fb" stroke="#7a9cb0" stroke-width="1.1"/>
<path d="M536.5 1073 v9" fill="none" stroke="#8aaec4" stroke-width="2" />
<path d="M567 1083.5 l10 -11 q2.5 -2.5 4.5 -0.5 q2 2 -0.5 4.5 l-9.5 10 q-2 2 -3.5 0.5 q-1.5 -1.5 0.5 -3.5 l7.5 -8" fill="none" stroke="#6a6a6a" stroke-width="1.8" />
<circle cx="602.5" cy="1069" r="3.3" fill="#b4dc50"/><circle cx="613" cy="1069" r="3.3" fill="#1eb080"/><circle cx="602.5" cy="1080" r="3.3" fill="#eca850"/><circle cx="613" cy="1080" r="3.3" fill="#5a6068"/>
<rect x="1918.8" y="0" width="1.2" height="1094" fill="#2a2a2a" />
</svg>
</body></html>
